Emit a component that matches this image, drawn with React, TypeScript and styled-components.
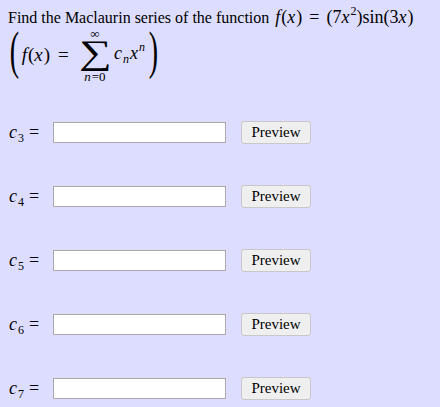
import styled, { createGlobalStyle } from "styled-components";

const GlobalStyle = createGlobalStyle`
  html, body {
    margin: 0;
    padding: 0;
    background: #ddddff;
  }
  body {
    font-family: "Liberation Serif", "Times New Roman", serif;
    font-size: 16px;
    color: #000;
  }
`;

const Page = styled.div`
  padding: 6px 8px 0 8px;
`;

const Question = styled.div`
  font-size: 16px;
  line-height: 22px;
  white-space: nowrap;
`;

const Math = styled.span<{ $size?: number }>`
  font-size: ${(p) => p.$size ?? 18}px;
  margin-left: 2px;
`;

const MathI = styled.span`
  font-style: italic;
  padding-right: 1px;
`;

const Op = styled.span<{ $space?: number }>`
  margin: 0 ${(p) => p.$space ?? 7}px;
`;

const Sup = styled.sup`
  font-size: 12px;
  line-height: 0;
  vertical-align: 8px;
`;

const Sub = styled.sub`
  font-size: 12px;
  line-height: 0;
  vertical-align: -4px;
`;

const Display = styled.div`
  display: flex;
  align-items: center;
  height: 56px;
  margin-top: -2px;
  font-size: 19px;
`;

const BigParen = styled.span`
  display: inline-block;
  font-size: 20px;
  line-height: 1;
  transform: translateY(-5px) scaleY(2.6) scaleX(1.4);
  margin: 0 4px 0 3px;
`;

const Sum = styled.span`
  display: inline-flex;
  flex-direction: column;
  align-items: center;
  margin: 0 7px 0 6px;
  line-height: 1;
`;

const Limit = styled.span<{ $below?: boolean }>`
  font-size: 13px;
  line-height: 12px;
  margin-top: ${(p) => (p.$below ? 5 : 0)}px;
  margin-bottom: ${(p) => (p.$below ? 0 : 2)}px;
`;

const Sigma = styled.span`
  display: inline-block;
  font-size: 34px;
  line-height: 24px;
  transform: translateY(-1px) scaleX(1.35);
`;

const Term = styled.span`
  font-size: 18px;
  margin-top: -4px;
  margin-right: 1px;
`;

const Rows = styled.div`
  display: flex;
  flex-direction: column;
  gap: 41px;
  margin-top: 38px;
`;

const Row = styled.div`
  display: flex;
  align-items: center;
  height: 23px;
`;

const Label = styled.span`
  width: 44px;
  padding-left: 1px;
  font-size: 18px;
  white-space: nowrap;
`;

const Field = styled.input`
  box-sizing: border-box;
  width: 173px;
  height: 21px;
  border: 1px solid #a9a9a9;
  background: #fff;
  padding: 1px 2px;
  margin: 0;
`;

const PreviewButton = styled.button`
  box-sizing: border-box;
  margin-left: 15px;
  width: 70px;
  height: 23px;
  padding: 0;
  font-family: "Liberation Serif", "Times New Roman", serif;
  font-size: 15px;
  color: #000;
  background: #efefef;
  border: 1px solid #c8c8c8;
  border-radius: 3px;
`;

const indices = [3, 4, 5, 6, 7];

export default function App() {
  return (
    <Page>
      <GlobalStyle />
      <Question>
        Find the Maclaurin series of the function{" "}
        <Math>
          <MathI>f</MathI>(<MathI>x</MathI>)<Op>=</Op>(7<MathI>x</MathI>
          <Sup>2</Sup>)sin(3<MathI>x</MathI>)
        </Math>
      </Question>
      <Display>
        <BigParen>(</BigParen>
        <MathI>f</MathI>(<MathI>x</MathI>)<Op $space={8}>=</Op>
        <Sum>
          <Limit>∞</Limit>
          <Sigma>∑</Sigma>
          <Limit $below>
            <MathI>n</MathI>=0
          </Limit>
        </Sum>
        <Term>
          <MathI>c</MathI>
          <Sub>
            <MathI>n</MathI>
          </Sub>
          <MathI>x</MathI>
          <Sup>
            <MathI>n</MathI>
          </Sup>
        </Term>
        <BigParen>)</BigParen>
      </Display>
      <Rows>
        {indices.map((i) => (
          <Row key={i}>
            <Label>
              <MathI>c</MathI>
              <Sub>{i}</Sub>
              <Op $space={5}>=</Op>
            </Label>
            <Field type="text" />
            <PreviewButton>Preview</PreviewButton>
          </Row>
        ))}
      </Rows>
    </Page>
  );
}
